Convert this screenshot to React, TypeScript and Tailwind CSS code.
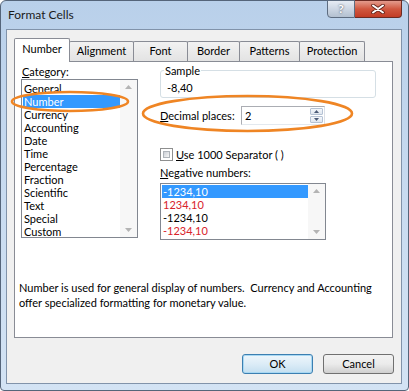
import React from "react";

function ScrollArrow({ up }: { up: boolean }) {
  return (
    <svg width="7" height="4" viewBox="0 0 7 4">
      {up ? (
        <path d="M0 4 L3.5 0 L7 4 Z" fill="#b4b4b4" />
      ) : (
        <path d="M0 0 L3.5 4 L7 0 Z" fill="#b4b4b4" />
      )}
    </svg>
  );
}

function VScroll() {
  return (
    <div className="w-[17px] bg-[#f7f7f7] flex flex-col justify-between items-center py-[5px]">
      <ScrollArrow up />
      <ScrollArrow up={false} />
    </div>
  );
}

const categories = [
  "General",
  "Number",
  "Currency",
  "Accounting",
  "Date",
  "Time",
  "Percentage",
  "Fraction",
  "Scientific",
  "Text",
  "Special",
  "Custom",
];

const negatives: { t: string; red: boolean; sel?: boolean }[] = [
  { t: "-1234,10", red: false, sel: true },
  { t: "1234,10", red: true },
  { t: "-1234,10", red: false },
  { t: "-1234,10", red: true },
];

const tabs = [
  { t: "Number", w: "w-[56px]" },
  { t: "Alignment", w: "w-[65px]" },
  { t: "Font", w: "w-[55px]" },
  { t: "Border", w: "w-[53px]" },
  { t: "Patterns", w: "w-[61px]" },
  { t: "Protection", w: "w-[66px]" },
];

export default function App() {
  return (
    <div className="w-[409px] h-[391px] overflow-hidden bg-white">
      <div className="relative w-[409px] h-[391px] flex flex-col rounded-t-[6px] rounded-b-[4px] border border-[#55657a] bg-gradient-to-b from-[#b9d0ea] via-[#c8dbf0] to-[#d3e3f4] font-['Lato',sans-serif] text-[11px] text-black">
        {/* Title bar */}
        <div className="h-[28px] shrink-0 flex items-start justify-between">
          <div className="pl-[7px] pt-[6px] text-[12px] leading-[16px] text-[#1b1b1b]">
            Format Cells
          </div>
          <div className="flex mr-[6px] -mt-px">
            <div className="w-[28px] h-[18px] rounded-bl-[4px] border border-[#5d6c80] bg-gradient-to-b from-[#e6ecf4] via-[#ccd6e3] to-[#b3c0d0] flex items-center justify-center text-[12px] leading-[12px] font-bold text-white [text-shadow:0_0_2px_#2c3440]">
              ?
            </div>
            <div className="w-[47px] h-[18px] rounded-br-[4px] border border-l-0 border-[#6b2a22] bg-gradient-to-b from-[#e39b8d] via-[#d0573f] to-[#c23c25] flex items-center justify-center">
              <svg width="14" height="10" viewBox="0 0 14 10">
                <path d="M2 1.5 L12 8.5 M12 1.5 L2 8.5" stroke="#5e2219" strokeWidth="3.6" strokeLinecap="round" />
                <path d="M2 1.5 L12 8.5 M12 1.5 L2 8.5" stroke="#ffffff" strokeWidth="2" strokeLinecap="round" />
              </svg>
            </div>
          </div>
        </div>

        {/* Client area */}
        <div className="ml-[5px] mr-[6px] mb-[6px] flex-1 border border-[#8193aa] bg-[#f0f0f0] flex flex-col pt-[8px]">
          {/* Tabs */}
          <div className="flex items-end pl-[7px]">
            {tabs.map((tab, i) =>
              i === 0 ? (
                <div
                  key={tab.t}
                  className={`${tab.w} h-[24px] -mb-px relative z-10 bg-white border border-b-0 border-[#898c95] rounded-t-[2px] flex items-center justify-center pb-[2px]`}
                >
                  {tab.t}
                </div>
              ) : (
                <div
                  key={tab.t}
                  className={`${tab.w} h-[20px] -ml-px bg-gradient-to-b from-[#f2f2f2] to-[#e3e3e3] border border-b-0 border-[#898c95] rounded-t-[2px] flex items-center justify-center`}
                >
                  {tab.t}
                </div>
              )
            )}
          </div>

          {/* Panel */}
          <div className="ml-[7px] w-[379px] h-[277px] border border-[#898c95] bg-white flex flex-col">
            <div className="flex pl-[6px]">
              {/* Left column */}
              <div className="w-[117px] flex flex-col">
                <div className="mt-[3px] leading-[13px] pl-[1px]">
                  <span className="underline">C</span>ategory:
                </div>
                <div className="mt-[1px] h-[159px] border border-[#828790] bg-white flex">
                  <div className="flex-1 pt-[2px] pl-[1px]">
                    {categories.map((c) => (
                      <div
                        key={c}
                        className={`h-[13px] leading-[13px] pl-[1px] ${
                          c === "Number" ? "bg-[#3399ff] text-white" : ""
                        }`}
                      >
                        {c}
                      </div>
                    ))}
                  </div>
                  <VScroll />
                </div>
              </div>

              {/* Right column */}
              <div className="ml-[22px] flex flex-col">
                <fieldset className="w-[216px] border border-[#d5dfe5] rounded-[3px] pl-[6px] pt-[4px] pb-[3px] mt-[2px]">
                  <legend className="-ml-[3px] px-[1px] leading-[13px]">Sample</legend>
                  <div className="leading-[13px]">-8,40</div>
                </fieldset>

                <div className="mt-[8px] flex items-center h-[19px]">
                  <div className="w-[81px] leading-[13px]">
                    <span className="underline">D</span>ecimal places:
                  </div>
                  <div className="w-[84px] h-[19px] border border-[#abadb3] border-b-[#e3e9ef] border-r-[#dbdfe6] bg-white flex">
                    <div className="flex-1 pl-[3px] leading-[17px]">2</div>
                    <div className="w-[15px] flex flex-col p-px gap-px">
                      <div className="flex-1 border border-[#b5c2d4] rounded-[1px] bg-gradient-to-b from-[#f4f7fb] to-[#dfe6ef] flex items-center justify-center">
                        <svg width="5" height="3" viewBox="0 0 5 3">
                          <path d="M0 3 L2.5 0 L5 3 Z" fill="#4a5a76" />
                        </svg>
                      </div>
                      <div className="flex-1 border border-[#b5c2d4] rounded-[1px] bg-gradient-to-b from-[#f4f7fb] to-[#dfe6ef] flex items-center justify-center">
                        <svg width="5" height="3" viewBox="0 0 5 3">
                          <path d="M0 0 L2.5 3 L5 0 Z" fill="#4a5a76" />
                        </svg>
                      </div>
                    </div>
                  </div>
                </div>

                <div className="mt-[23px] flex items-center h-[13px]">
                  <div className="w-[13px] h-[13px] border border-[#8e8f8f] bg-white p-[2px]">
                    <div className="w-full h-full bg-gradient-to-br from-[#cbcfd5] to-[#f6f6f6] border border-[#aeb3b9]" />
                  </div>
                  <div className="ml-[3px] leading-[13px]">
                    <span className="underline">U</span>se 1000 Separator ( )
                  </div>
                </div>

                <div className="mt-[5px] leading-[13px]">
                  <span className="underline">N</span>egative numbers:
                </div>
                <div className="mt-[4px] w-[166px] h-[57px] border border-[#828790] bg-white flex">
                  <div className="flex-1 pt-[1px] pl-[1px]">
                    {negatives.map((n, i) => (
                      <div
                        key={i}
                        className={`h-[13px] leading-[13px] pl-[1px] ${
                          n.sel
                            ? "bg-[#3399ff] text-white"
                            : n.red
                            ? "text-[#d8232a]"
                            : ""
                        }`}
                      >
                        {n.t}
                      </div>
                    ))}
                  </div>
                  <VScroll />
                </div>
              </div>
            </div>

            <div className="mt-[40px] pl-[4px] leading-[15px]">
              <div>Number is used for general display of numbers.&nbsp; Currency and Accounting</div>
              <div>offer specialized formatting for monetary value.</div>
            </div>
          </div>

          {/* Buttons */}
          <div className="mt-[16px] flex justify-end gap-[10px] pr-[7px]">
            <div className="w-[71px] h-[20px] rounded-[3px] border border-[#3c7fb1] bg-gradient-to-b from-[#eef6fb] via-[#dcecf7] to-[#c4dff0] flex items-center justify-center shadow-[inset_0_0_0_1px_#a8d8f3]">
              OK
            </div>
            <div className="w-[71px] h-[20px] rounded-[3px] border border-[#707070] bg-gradient-to-b from-[#f2f2f2] via-[#ebebeb] to-[#cfcfcf] flex items-center justify-center">
              Cancel
            </div>
          </div>
        </div>

        {/* Orange annotation ellipses */}
        <svg className="absolute left-[-1px] top-[-1px] pointer-events-none" width="409" height="391" viewBox="0 0 409 391">
          <ellipse cx="70" cy="101.5" rx="58" ry="9.5" fill="none" stroke="#ef8524" strokeWidth="2.6" />
          <ellipse cx="247.5" cy="113.5" rx="104.5" ry="17.5" fill="none" stroke="#ef8524" strokeWidth="2.6" />
        </svg>
      </div>
    </div>
  );
}
